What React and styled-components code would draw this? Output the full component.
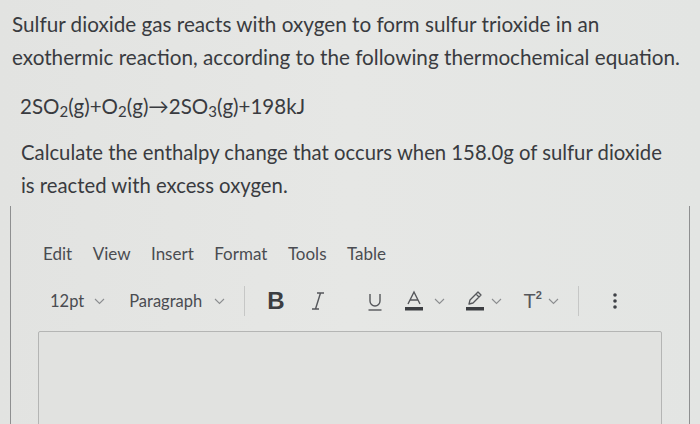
import React from 'react';
import styled, { createGlobalStyle } from 'styled-components';

const GlobalStyle = createGlobalStyle`
  html, body {
    margin: 0;
    padding: 0;
    background: #e3e4e2;
  }
  body {
    font-family: Lato, "Noto Sans", sans-serif;
    color: #3c3e43;
    overflow: hidden;
  }
`;

const Page = styled.div`
  width: 700px;
  height: 424px;
  overflow: hidden;
  background: linear-gradient(90deg, #e2e3e1 0%, #e6e7e5 50%, #e3e5e3 100%);
`;

const Question = styled.div`
  padding: 8px 0 0 12px;
`;

const Para = styled.p`
  margin: 0 0 ${(p) => p.$gap || 0}px ${(p) => p.$indent || 0}px;
  font-size: ${(p) => p.$size || 20.5}px;
  line-height: 33px;
  color: #393b40;
  white-space: nowrap;
`;

const Equation = styled.p`
  margin: 0 0 13px 8px;
  font-size: 20.5px;
  line-height: 33px;
  color: #393b40;
  sub {
    font-size: 15px;
    vertical-align: -3px;
    line-height: 0;
  }
`;

const Editor = styled.div`
  margin: 4px 10px 0 10px;
  height: 260px;
  border-left: 1px solid #8e8f90;
  border-right: 1px solid #8e8f90;
  padding: 0 0 0 27px;
`;

const MenuBar = styled.div`
  display: flex;
  gap: 20.5px;
  padding: 29px 0 0 5px;
  height: 36px;
  align-items: center;
`;

const MenuItem = styled.span`
  font-size: 17px;
  color: #4a4c51;
`;

const ToolBar = styled.div`
  display: flex;
  align-items: center;
  height: 46px;
  margin-top: 7px;
  padding-left: 12px;
`;

const Select = styled.span`
  display: inline-flex;
  align-items: center;
  gap: ${(p) => p.$gap}px;
  font-size: 16.5px;
  color: #4a4c51;
  margin-right: ${(p) => p.$mr}px;
`;

const Divider = styled.span`
  width: 1px;
  height: 30px;
  background: #c6c7c6;
  margin-right: ${(p) => p.$mr}px;
`;

const Tool = styled.span`
  display: inline-flex;
  align-items: center;
  gap: ${(p) => p.$gap || 0}px;
  margin-right: ${(p) => p.$mr}px;
  color: #3f4146;
`;

const BoldGlyph = styled.span`
  font-family: "Liberation Sans", Arial, sans-serif;
  font-weight: 700;
  font-size: 24px;
  line-height: 1;
  color: #3c3e42;
`;

const SupGlyph = styled.span`
  font-family: "Liberation Sans", Arial, sans-serif;
  font-size: 20px;
  line-height: 1;
  color: #55575b;
  sup {
    font-size: 11px;
    font-weight: 700;
    vertical-align: 9px;
    line-height: 0;
  }
`;

const TextArea = styled.div`
  margin: 7px 27px 0 0;
  height: 120px;
  border: 1px solid #b4b5b4;
  border-radius: 2px;
  background: #e1e2e0;
`;

const Chevron = () => (
  <svg width="11" height="7" viewBox="0 0 11 7" fill="none">
    <path d="M1 1l4.5 4.5L10 1" stroke="#8c8e90" strokeWidth="1.1" />
  </svg>
);

const ItalicIcon = () => (
  <svg width="14" height="20" viewBox="0 0 14 20" fill="none" stroke="#55575b" strokeWidth="1.4">
    <path d="M6 2h7M1 18h7M9.5 2L4.5 18" />
  </svg>
);

const UnderlineIcon = () => (
  <svg width="16" height="22" viewBox="0 0 16 22" fill="none" stroke="#55575b" strokeWidth="1.4">
    <path d="M3 4v7a5 5 0 0010 0V4" />
    <path d="M1.5 20h13" />
  </svg>
);

const ColorAIcon = () => (
  <svg width="20" height="22" viewBox="0 0 20 22" fill="none">
    <path d="M4 14L10 2l6 12M6 10h8" stroke="#55575b" strokeWidth="1.4" />
    <rect x="1" y="17" width="18" height="3.5" fill="#3c3e42" />
  </svg>
);

const PenIcon = () => (
  <svg width="20" height="22" viewBox="0 0 20 22" fill="none">
    <path d="M4 14l1-4 8-8 3 3-8 8-4 1z M11 4l3 3" stroke="#55575b" strokeWidth="1.3" strokeLinejoin="round" />
    <rect x="1" y="17" width="18" height="3.5" fill="#3c3e42" />
  </svg>
);

const DotsIcon = () => (
  <svg width="6" height="18" viewBox="0 0 6 18">
    <circle cx="3" cy="3" r="1.8" fill="#3f4146" />
    <circle cx="3" cy="9" r="1.8" fill="#3f4146" />
    <circle cx="3" cy="15" r="1.8" fill="#3f4146" />
  </svg>
);

export default function App() {
  return (
    <Page>
      <GlobalStyle />
      <Question>
        <Para $gap={16} $size={20.7}>
          Sulfur dioxide gas reacts with oxygen to form sulfur trioxide in an
          <br />
          exothermic reaction, according to the following thermochemical equation.
        </Para>
        <Equation>
          2SO<sub>2</sub>(g)+O<sub>2</sub>(g)→2SO<sub>3</sub>(g)+198kJ
        </Equation>
        <Para $indent={9} $size={20.3}>
          Calculate the enthalpy change that occurs when 158.0g of sulfur dioxide
          <br />
          is reacted with excess oxygen.
        </Para>
      </Question>
      <Editor>
        <MenuBar>
          <MenuItem>Edit</MenuItem>
          <MenuItem>View</MenuItem>
          <MenuItem>Insert</MenuItem>
          <MenuItem>Format</MenuItem>
          <MenuItem>Tools</MenuItem>
          <MenuItem>Table</MenuItem>
        </MenuBar>
        <ToolBar>
          <Select $gap={10} $mr={24}>12pt <Chevron /></Select>
          <Select $gap={12} $mr={19}>Paragraph <Chevron /></Select>
          <Divider $mr={22} />
          <Tool $mr={26}><BoldGlyph>B</BoldGlyph></Tool>
          <Tool $mr={42}><ItalicIcon /></Tool>
          <Tool $mr={21}><UnderlineIcon /></Tool>
          <Tool $gap={10} $mr={20}><ColorAIcon /><Chevron /></Tool>
          <Tool $gap={6} $mr={22}><PenIcon /><Chevron /></Tool>
          <Tool $gap={6} $mr={19}><SupGlyph>T<sup>2</sup></SupGlyph><Chevron /></Tool>
          <Divider $mr={33} />
          <Tool $mr={0}><DotsIcon /></Tool>
        </ToolBar>
        <TextArea />
      </Editor>
    </Page>
  );
}
